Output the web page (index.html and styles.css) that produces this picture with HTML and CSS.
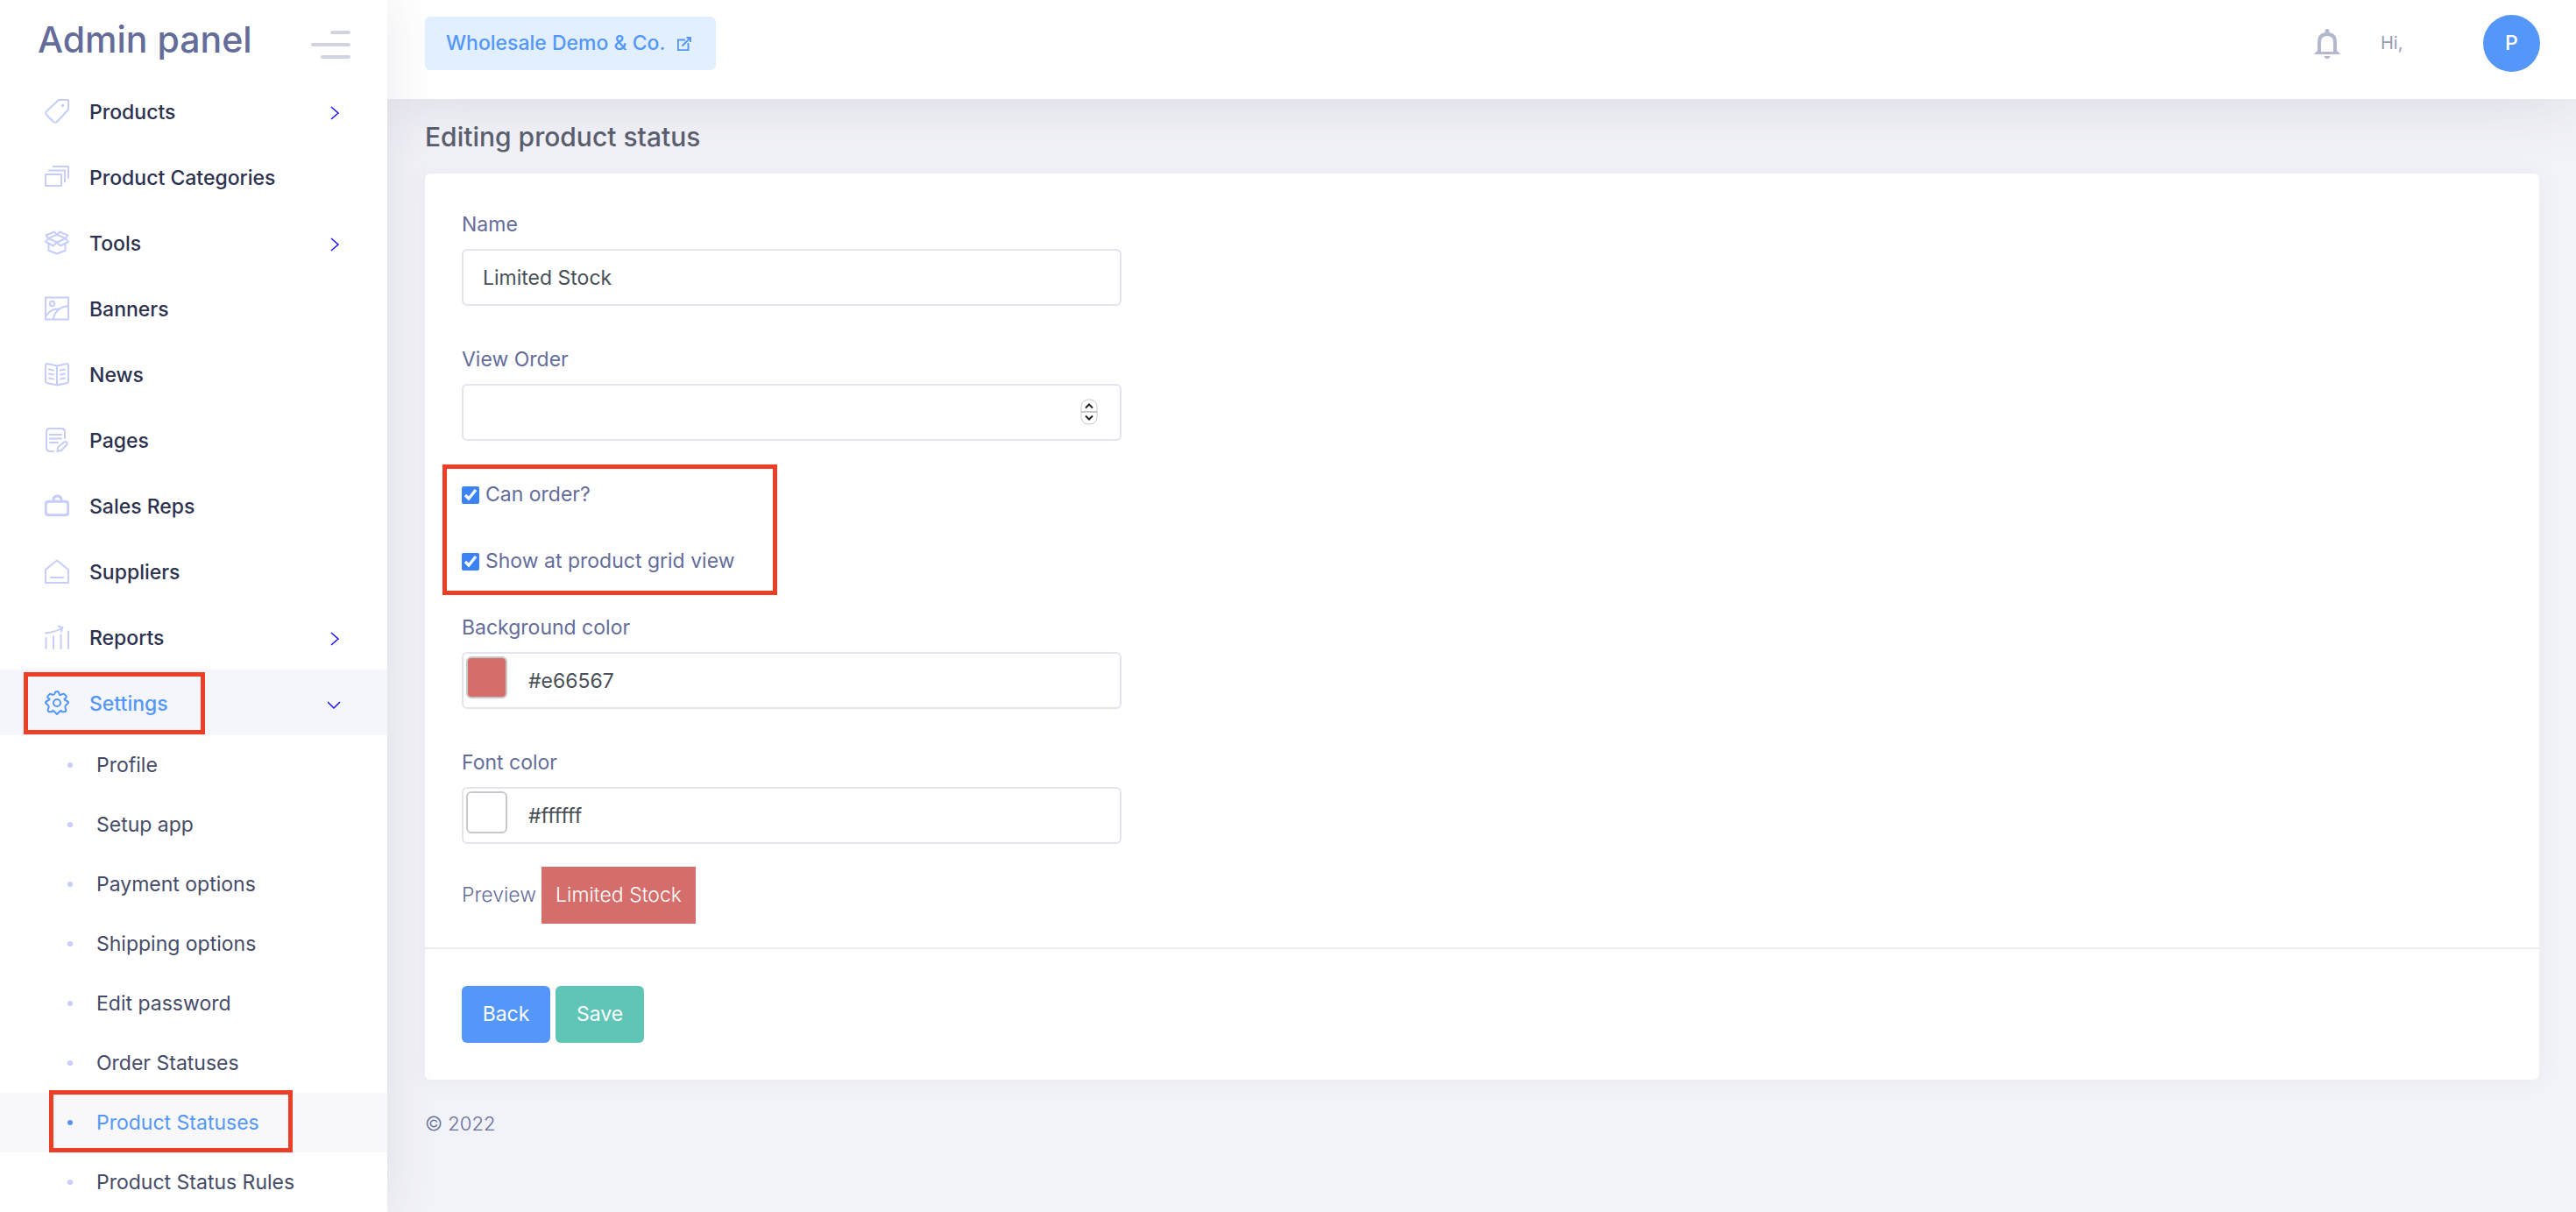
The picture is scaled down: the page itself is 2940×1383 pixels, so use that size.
FILE: index.html
```html
<!DOCTYPE html>
<html lang="en">
<head>
  <meta charset="utf-8">
  <title>Editing product status</title>
  <link rel="stylesheet" href="styles.css">
</head>
<body>
  <aside class="sidebar">
    <div class="brand">
      <a class="brand-name" href="#">Admin panel</a>
      <button class="menu-toggle" type="button" aria-label="Toggle menu">
        <span class="bar bar-short"></span>
        <span class="bar bar-long"></span>
        <span class="bar bar-medium"></span>
      </button>
    </div>
    <nav>
      <ul class="menu">
        <li>
          <a class="menu-link" href="#">
            <svg class="icon" viewBox="0 0 28 28"><path d="M16 1h11v11L14 26q-2 1.500-4 0L2 18q-1.500-2 0-4z"/><circle class="fill" cx="20.500" cy="7.500" r="1.700"/></svg>
            <span class="label">Products</span>
            <svg class="arrow" viewBox="0 0 16 16"><path d="M4 1l8 7-8 7"/></svg>
          </a>
        </li>
        <li>
          <a class="menu-link" href="#">
            <svg class="icon" viewBox="0 0 28 28"><path d="M1 11h18v13H1zM5 6.500h18v13M9.500 2H27v13"/></svg>
            <span class="label">Product Categories</span>
          </a>
        </li>
        <li>
          <a class="menu-link" href="#">
            <svg class="icon" viewBox="0 0 28 28"><path d="M14 5l10 4-10 4.500L4 9zM14 5l-3-3.500L1.500 5.500 4 9 1 13l9 4.500 4-4 4 4 9-4.500-3-4 2.500-3.500L17 1.500zM4.500 15v8l9.500 3.500 9.500-3.500v-8"/></svg>
            <span class="label">Tools</span>
            <svg class="arrow" viewBox="0 0 16 16"><path d="M4 1l8 7-8 7"/></svg>
          </a>
        </li>
        <li>
          <a class="menu-link" href="#">
            <svg class="icon" viewBox="0 0 28 28"><path d="M1 1.500h26v25H1zM2 22q5-8 14-7.500M10 26q2-13 17-15"/><circle cx="8.500" cy="8.500" r="2.800"/></svg>
            <span class="label">Banners</span>
          </a>
        </li>
        <li>
          <a class="menu-link" href="#">
            <svg class="icon" viewBox="0 0 28 28"><path d="M14 4.500v22M14 4.500L3 2q-2 0-2 1.500V22q0 1.500 1.500 2L14 26.500 25.500 24q1.500-.5 1.500-2V3.500Q27 2 25 2zM5 8.500l5 1M5 13.500l5 1M5 18.500l5 1M23 8.500l-5 1M23 13.500l-5 1M23 18.500l-5 1"/></svg>
            <span class="label">News</span>
          </a>
        </li>
        <li>
          <a class="menu-link" href="#">
            <svg class="icon" viewBox="0 0 28 28"><path d="M10 27H6q-4 0-4-4V5q0-4 4-4h13q4 0 4 4v7M6 8h13M6 12.500h13M6 17h9M14.500 27l.5-4.500 7-6q2-1 3.200.3t-.2 3L19 26z"/></svg>
            <span class="label">Pages</span>
          </a>
        </li>
        <li>
          <a class="menu-link" href="#">
            <svg class="icon thick" viewBox="0 0 28 28"><rect x="1.200" y="9.200" width="25.600" height="15.600" rx="3"/><path d="M10 9V7.500Q10 3 14.500 3T19 7.500V9"/></svg>
            <span class="label">Sales Reps</span>
          </a>
        </li>
        <li>
          <a class="menu-link" href="#">
            <svg class="icon" viewBox="0 0 28 28"><path d="M1 27V12L14 1.500 27 12v15zM7 21h14"/></svg>
            <span class="label">Suppliers</span>
          </a>
        </li>
        <li>
          <a class="menu-link" href="#">
            <svg class="icon" viewBox="0 0 28 28"><path d="M1.500 15v12M10 13.500V27M18.500 11.500V27M27 7.500V27M1 9.500Q13 8 20 3.500M15.500 1.500L20.500 3 19 7.500"/></svg>
            <span class="label">Reports</span>
            <svg class="arrow" viewBox="0 0 16 16"><path d="M4 1l8 7-8 7"/></svg>
          </a>
        </li>
        <li>
          <a class="menu-link active marked mark-settings" href="#">
            <svg class="icon" viewBox="0 0 28 28"><path d="M11.500 3.500Q12 1 14 1t2.500 2.500 2.500 1.200 3-.9 2.300 2.300-1 2.900 1.200 2.500T27 14t-2.500 2.500-1.200 2.500 1 2.900-2.300 2.300-3-.9-2.500 1.200T14 27t-2.500-2.500-2.500-1.200-3 .9-2.300-2.300 1-2.900-1.200-2.500T1 14t2.500-2.500 1.200-2.500-1-2.900L6 3.800l3 .9q2 .3 2.500-1.200z"/><circle cx="14" cy="14" r="4"/></svg>
            <span class="label">Settings</span>
            <svg class="arrow" viewBox="0 0 16 16"><path d="M0 5l7 7 7-7"/></svg>
          </a>
          <ul class="submenu">
            <li><a class="submenu-link" href="#">Profile</a></li>
            <li><a class="submenu-link" href="#">Setup app</a></li>
            <li><a class="submenu-link" href="#">Payment options</a></li>
            <li><a class="submenu-link" href="#">Shipping options</a></li>
            <li><a class="submenu-link" href="#">Edit password</a></li>
            <li><a class="submenu-link" href="#">Order Statuses</a></li>
            <li><a class="submenu-link active marked mark-statuses" href="#">Product Statuses</a></li>
            <li><a class="submenu-link" href="#">Product Status Rules</a></li>
          </ul>
        </li>
      </ul>
    </nav>
  </aside>

  <div class="page">
    <header class="topbar">
      <a class="shop-link" href="#">
        Wholesale Demo &amp; Co.
        <svg class="external" viewBox="0 0 16 16"><path d="M9 3.500H.8v11.700h11.700V7M5.500 10.500L15 1M10.500 1H15v5"/></svg>
      </a>
      <div class="user">
        <button class="bell" type="button" aria-label="Notifications">
          <svg viewBox="0 0 30 34"><path class="outline" d="M6 27V15Q6 6 15 6T24 15v12"/><path d="M12.500 5V2.500a2.500 2.500 0 0 1 5 0V5zM0 29q1.500-2.500 4-4v1h22v-1q2.500 1.500 4 4zM11.500 31h7q-1 3-3.500 3t-3.500-3z"/></svg>
        </button>
        <span class="greeting">Hi,</span>
        <a class="avatar" href="#">P</a>
      </div>
    </header>

    <main class="content">
      <h1>Editing product status</h1>
      <form class="card">
        <div class="card-body">
          <div class="group">
            <label for="name">Name</label>
            <input class="control" type="text" id="name" value="Limited Stock">
          </div>
          <div class="group">
            <label for="viewOrder">View Order</label>
            <div class="number">
              <input class="control" type="number" id="viewOrder">
              <svg class="spinner" viewBox="0 0 20 30"><rect x="1" y="1" width="18" height="28" rx="8"/><path class="split" d="M1 15h18"/><path class="tick" d="M6 10.500l4-4 4 4M6 19.500l4 4 4-4"/></svg>
            </div>
          </div>
          <div class="checks marked mark-checks">
            <label class="check"><input type="checkbox" id="canOrder" checked>Can order?</label>
            <label class="check"><input type="checkbox" id="showGrid" checked>Show at product grid view</label>
          </div>
          <div class="group">
            <label for="bgColor">Background color</label>
            <div class="control color-control">
              <button class="swatch swatch-red" type="button" aria-label="Pick background color"></button>
              <input class="color-text" type="text" id="bgColor" value="#e66567">
            </div>
          </div>
          <div class="group">
            <label for="fontColor">Font color</label>
            <div class="control color-control">
              <button class="swatch" type="button" aria-label="Pick font color"></button>
              <input class="color-text" type="text" id="fontColor" value="#ffffff">
            </div>
          </div>
          <div class="preview">Preview <span class="preview-tag">Limited Stock</span></div>
        </div>
        <div class="card-footer">
          <button class="btn btn-back" type="button">Back</button>
          <button class="btn btn-save" type="submit">Save</button>
        </div>
      </form>
      <footer class="copyright">© 2022</footer>
    </main>
  </div>

  <script>
    var nameInput = document.getElementById('name');
    var previewTag = document.querySelector('.preview-tag');

    nameInput.addEventListener('input', function() {
      previewTag.textContent = nameInput.value;
    });
  </script>
</body>
</html>
```

FILE: styles.css
```css
*,
*::before,
*::after {
  box-sizing: border-box;
}

body {
  margin: 0;
  display: flex;
  height: 100vh;
  overflow: hidden;
  background-color: #f2f3f8;
  color: #646c9a;
  font-family: Inter, "Open Sans", sans-serif;
  font-size: 23px;
  line-height: 33px;
}

ul {
  list-style: none;
  margin: 0;
  padding: 0;
}

a {
  color: inherit;
  text-decoration: none;
}

button,
input {
  font: inherit;
}

button {
  border: none;
  padding: 0;
  background: none;
  cursor: pointer;
}

/* Sidebar */
.sidebar {
  position: relative;
  z-index: 2;
  flex: none;
  width: 442px;
  background-color: #fff;
  box-shadow: 0 0 56px rgba(82, 63, 105, 0.12);
}

.brand {
  display: flex;
  align-items: center;
  justify-content: space-between;
  height: 89px;
  padding: 0 42px 0 43px;
}

.brand-name {
  font-size: 41px;
  font-weight: 500;
  line-height: 88px;
}

.menu-toggle {
  display: flex;
  flex-direction: column;
  align-items: flex-end;
  gap: 10px;
  padding-top: 12px;
}

.bar {
  height: 4px;
  border-radius: 2px;
  background-color: #d1d3e0;
}

.bar-short {
  width: 23px;
}

.bar-long {
  width: 45px;
}

.bar-medium {
  width: 34px;
}

.menu-link {
  display: flex;
  align-items: center;
  height: 75px;
  padding: 0 52px 0 51px;
  color: #2c3150;
  font-weight: 500;
}

.menu-link .label {
  flex: 1;
  padding-top: 4px;
}

.icon {
  width: 28px;
  height: 28px;
  margin-right: 23px;
  fill: none;
  stroke: #c5cdf8;
  stroke-width: 2;
  stroke-linejoin: round;
  stroke-linecap: round;
}

.icon.thick {
  stroke-width: 3;
}

.icon .fill {
  fill: #c5cdf8;
  stroke: none;
}

.arrow {
  width: 16px;
  height: 16px;
  margin-top: 4px;
  fill: none;
  stroke: #1a10ff;
  stroke-width: 1.500;
}

.menu-link.active {
  background-color: #f5f6fc;
  color: #5497f8;
}

.menu-link.active .icon {
  stroke: #5497f8;
}

.submenu-link {
  display: flex;
  align-items: center;
  height: 68px;
  padding-left: 77px;
  color: #464b68;
}

.submenu-link::before {
  content: "";
  width: 6px;
  height: 6px;
  margin-right: 27px;
  border-radius: 50%;
  background-color: #c5cdf8;
}

.submenu-link.active {
  background-color: #f8f8fb;
  color: #5497f8;
}

.submenu-link.active::before {
  background-color: #5497f8;
}

/* Red callout frames */
.marked {
  position: relative;
}

.marked::after {
  content: "";
  position: absolute;
  border: 5px solid #eb4027;
}

.mark-settings::after {
  top: 3px;
  bottom: 1px;
  left: 27px;
  width: 207px;
}

.mark-statuses::after {
  top: -3px;
  bottom: 0;
  left: 56px;
  width: 278px;
}

.mark-checks::after {
  top: -18px;
  bottom: -22px;
  left: -22px;
  width: 382px;
}

/* Top bar */
.page {
  flex: 1;
  min-width: 0;
}

.topbar {
  display: flex;
  align-items: flex-start;
  justify-content: space-between;
  height: 113px;
  padding: 17px 41px 0 43px;
  background-color: #fff;
  box-shadow: 0 0 80px rgba(82, 63, 105, 0.16);
}

.shop-link {
  display: flex;
  align-items: center;
  gap: 14px;
  height: 61px;
  margin-top: 2px;
  padding: 0 28px 0 24px;
  border-radius: 6px;
  background-color: #e2effe;
  color: #5497f8;
  font-weight: 500;
}

.external {
  width: 16px;
  height: 16px;
  fill: none;
  stroke: #5497f8;
  stroke-width: 2;
}

.user {
  display: flex;
  align-items: center;
}

.bell {
  width: 30px;
  height: 34px;
  margin-right: 46px;
}

.bell svg {
  display: block;
  fill: #b4b8ce;
}

.bell .outline {
  fill: none;
  stroke: #b4b8ce;
  stroke-width: 4;
}

.greeting {
  width: 117px;
  color: #959cb6;
  font-size: 20px;
}

.avatar {
  width: 65px;
  height: 65px;
  border-radius: 50%;
  background-color: #5497f8;
  color: #fff;
  font-weight: 500;
  line-height: 65px;
  text-align: center;
}

/* Content */
.content {
  padding: 22px 42px 0 43px;
}

h1 {
  margin: 0 0 21px;
  color: #595d6e;
  font-size: 30px;
  font-weight: 500;
  line-height: 42px;
}

.card {
  border-radius: 6px;
  background-color: #fff;
  box-shadow: 0 0 26px rgba(82, 63, 105, 0.06);
}

.card-body {
  padding: 42px 42px 27px;
}

.group {
  margin-bottom: 45px;
}

.group label {
  display: block;
  margin-bottom: 11px;
}

.control {
  display: block;
  width: 100%;
  max-width: 753px;
  height: 65px;
  padding: 0 22px;
  border: 2px solid #e2e5ec;
  border-radius: 6px;
  background-color: #fff;
  color: #495057;
}

.number {
  position: relative;
  max-width: 753px;
}

.number .control {
  appearance: textfield;
}

.spinner {
  position: absolute;
  top: 17px;
  right: 27px;
  width: 20px;
  height: 30px;
  fill: #fff;
  stroke: #c8c8c8;
  stroke-width: 1;
}

.spinner .split {
  stroke-width: 2;
}

.spinner .tick {
  fill: none;
  stroke: #222;
  stroke-width: 2;
}

.checks {
  display: flex;
  flex-direction: column;
  align-items: flex-start;
  gap: 43px;
  margin-bottom: 43px;
}

.check {
  display: flex;
  align-items: center;
  gap: 7px;
}

.check input {
  width: 20px;
  height: 20px;
  margin: 0;
  accent-color: #3b82f6;
}

.color-control {
  display: flex;
  align-items: flex-start;
  padding: 3px;
}

.swatch {
  flex: none;
  width: 47px;
  height: 48px;
  border: 2px solid #c8c8c8;
  border-radius: 6px;
  background-color: #fff;
}

.swatch-red {
  background-color: #d56e6b;
}

.color-text {
  flex: 1;
  height: 55px;
  padding: 0 24px;
  border: none;
  outline: none;
  color: inherit;
}

.group:has(+ .preview) {
  margin-bottom: 26px;
}

.preview {
  display: flex;
  align-items: center;
  gap: 6px;
  font-weight: 300;
}

.preview-tag {
  padding: 16px;
  background-color: #d56e6b;
  color: #fff;
}

.card-footer {
  display: flex;
  gap: 6px;
  padding: 42px;
  border-top: 2px solid #ebedf2;
}

.btn {
  min-width: 101px;
  height: 65px;
  padding: 0 23px;
  border-radius: 6px;
  color: #fff;
}

.btn-back {
  background-color: #5497f8;
}

.btn-save {
  background-color: #5fc6b7;
}

.copyright {
  padding: 34px 0;
  font-size: 22px;
  font-weight: 300;
}
```
